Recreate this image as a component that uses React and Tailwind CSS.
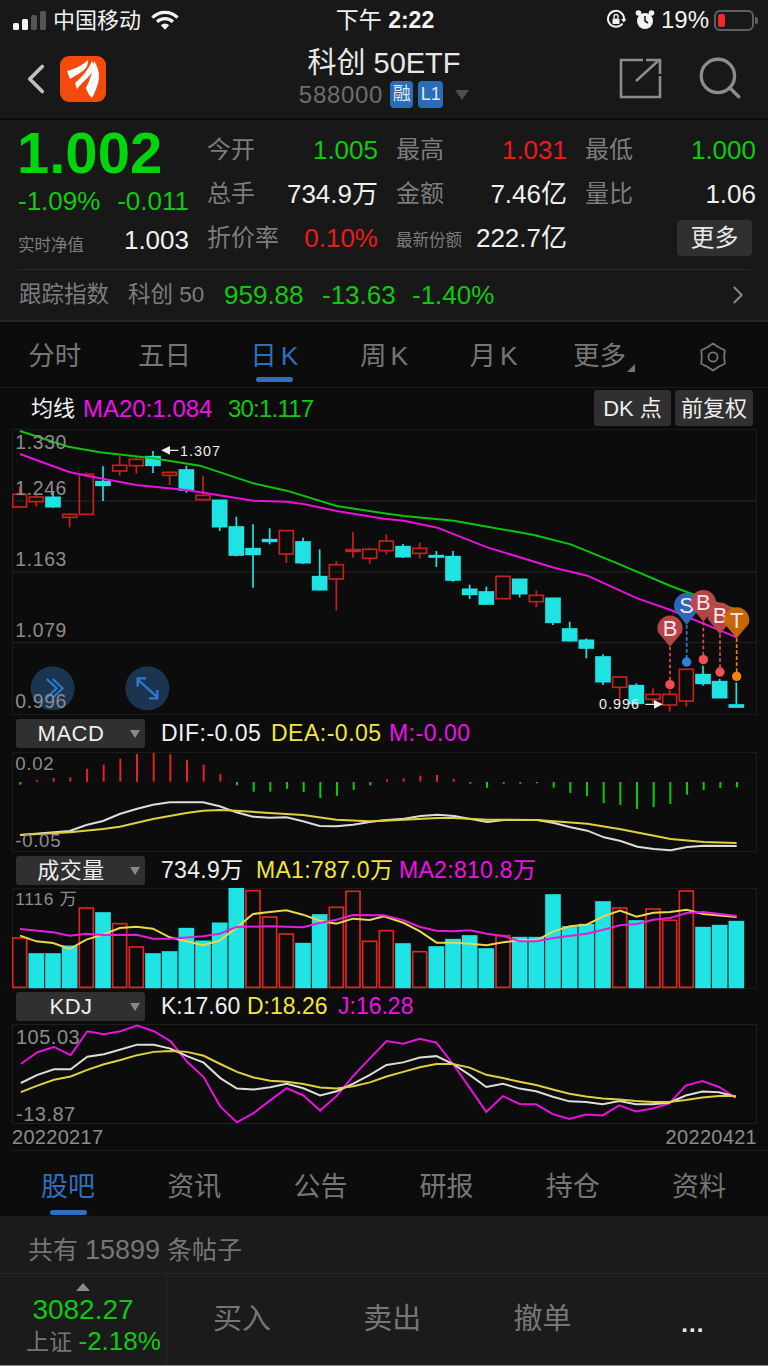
import { ChevronLeft, ChevronRight, Search } from "lucide-react";

const font = "font-['Liberation_Sans','Noto_Sans_CJK_SC',sans-serif]";

// data read off the chart, in 3x page units
const candles = [
  ["r", 185, 208, 246, 246], ["r", 208, 216, 230, 245], ["c", 198, 217, 245, 248], ["r", 264, 268, 277, 307],
  ["r", 142, 148, 268, 268], ["c", 124, 170, 181, 228], ["r", 92, 121, 138, 152], ["r", 97, 103, 122, 146],
  ["c", 78, 95, 121, 144], ["r", 140, 142, 151, 180], ["c", 122, 135, 195, 203], ["r", 152, 211, 224, 228],
  ["c", 225, 226, 305, 318], ["c", 275, 306, 390, 394], ["c", 298, 371, 388, 488], ["c", 310, 344, 349, 358],
  ["r", 316, 317, 387, 414], ["c", 338, 351, 413, 417], ["c", 373, 455, 494, 497], ["r", 408, 419, 462, 557],
  ["r", 321, 374, 379, 398], ["r", 368, 373, 400, 416], ["r", 328, 348, 377, 388], ["c", 357, 365, 395, 399],
  ["r", 353, 370, 385, 401], ["c", 378, 392, 396, 426], ["c", 378, 395, 465, 470], ["c", 479, 493, 508, 522],
  ["c", 485, 501, 537, 540], ["r", 453, 454, 521, 521], ["c", 462, 463, 506, 517], ["r", 497, 511, 530, 547],
  ["c", 518, 520, 592, 600], ["c", 590, 612, 647, 650], ["c", 640, 646, 669, 700], ["c", 688, 696, 770, 780],
  ["r", 755, 756, 787, 830], ["c", 775, 782, 835, 840], ["r", 790, 808, 823, 835], ["r", 795, 808, 840, 860],
  ["r", 732, 733, 828, 845], ["c", 722, 749, 775, 782], ["c", 762, 770, 818, 818], ["c", 772, 840, 846, 846],
];

const ma30 = "60,18 205,65 300,82 459,100 600,122 760,175 860,197 1010,243 1152,265 1212,273 1362,287 1462,305 1602,330 1712,358 1852,415 2012,483 2112,520 2212,555";
const ma20 = "60,87 205,140 259,152 409,180 559,195 760,227 860,230 910,237 1010,258 1152,281 1212,287 1312,308 1462,367 1662,428 1762,452 1912,520 2012,555 2210,637";

const macdBars = [
  [202, 210, 0], [196, 201, 1], [190, 201, 1], [188, 201, 1], [162, 201, 1], [150, 201, 1], [132, 201, 1], [118, 201, 1],
  [115, 201, 1], [119, 201, 1], [135, 201, 1], [150, 201, 1], [178, 201, 1], [202, 212, 0], [202, 231, 0], [202, 231, 0],
  [202, 222, 0], [202, 232, 0], [202, 250, 0], [202, 243, 0], [202, 226, 0], [202, 212, 0], [194, 201, 1], [191, 201, 1],
  [183, 201, 1], [181, 201, 1], [193, 201, 1], [202, 207, 0], [202, 219, 0], [202, 207, 0], [202, 207, 0], [202, 206, 0],
  [202, 219, 0], [202, 235, 0], [202, 245, 0], [202, 265, 0], [202, 271, 0], [202, 283, 0], [202, 277, 0], [202, 268, 0],
  [202, 240, 0], [202, 226, 0], [202, 220, 0], [202, 218, 0],
];
const dif = "60,361 209,349 259,331 309,319 359,298 409,283 459,270 509,263 609,263 659,275 709,293 759,306 809,309 859,308 909,320 959,334 1009,335 1059,330 1109,322 1152,317 1212,312 1262,304 1312,300 1362,304 1462,322 1512,316 1612,316 1662,325 1712,338 1762,348 1812,368 1862,379 1912,396 1962,403 2012,407 2062,397 2112,393 2210,394";
const dea = "60,361 209,353 309,343 359,336 459,313 559,295 609,288 659,286 709,288 809,295 909,301 1009,315 1109,320 1152,318 1212,315 1312,310 1362,310 1462,315 1612,316 1762,327 1862,344 2012,373 2112,382 2210,385";

const volBars = [
  ["r", 670], ["c", 718], ["c", 718], ["c", 695], ["r", 580], ["c", 595], ["r", 627], ["r", 697], ["c", 718], ["c", 712], ["c", 642],
  ["c", 680], ["c", 626], ["c", 521], ["r", 528], ["r", 607], ["r", 658], ["c", 687], ["c", 601], ["r", 578], ["r", 530], ["r", 680],
  ["r", 648], ["c", 688], ["r", 711], ["c", 697], ["c", 675], ["c", 664], ["c", 703], ["r", 663], ["c", 669], ["c", 669], ["c", 541],
  ["c", 637], ["c", 630], ["c", 562], ["r", 580], ["c", 619], ["r", 583], ["r", 617], ["r", 529], ["c", 639], ["c", 633], ["c", 621],
];
const ma1 = "60,663 109,680 159,685 209,703 259,675 309,660 359,640 409,636 459,642 509,668 559,680 609,692 659,678 709,640 759,598 809,592 859,587 909,600 959,618 1009,627 1059,612 1109,616 1152,605 1212,625 1260,650 1310,684 1360,684 1410,687 1460,692 1510,683 1560,676 1610,677 1660,650 1710,635 1760,630 1810,605 1860,588 1910,606 1960,594 2010,592 2060,585 2110,598 2210,607";
const ma2 = "60,643 159,653 209,663 259,657 309,661 409,660 459,672 509,672 609,665 659,657 709,637 809,635 909,638 959,625 1009,615 1059,601 1152,602 1212,617 1260,637 1310,648 1360,650 1410,647 1460,657 1510,664 1560,680 1610,680 1660,670 1760,657 1810,645 1860,632 1910,628 1960,615 2010,610 2060,595 2110,592 2160,598 2210,604";

// kdj values in the crop's own units (x = 40 + 34.03 * i)
const kdjJ = [222, 186, 170, 195, 122, 131, 122, 105, 122, 152, 215, 262, 352, 400, 372, 333, 296, 318, 364, 320, 258, 205, 152, 160, 145, 157, 222, 295, 368, 320, 344, 345, 375, 390, 376, 379, 348, 367, 358, 343, 288, 274, 292, 325];
const kdjK = [280, 255, 238, 238, 200, 192, 178, 163, 163, 175, 198, 218, 265, 297, 300, 293, 282, 296, 318, 305, 282, 255, 225, 217, 202, 198, 222, 255, 292, 282, 297, 305, 322, 336, 338, 345, 335, 345, 345, 340, 318, 306, 308, 322];
const kdjD = [308, 288, 270, 260, 240, 223, 210, 195, 185, 182, 185, 197, 222, 246, 263, 273, 276, 283, 294, 297, 290, 278, 260, 246, 232, 222, 222, 233, 255, 265, 276, 286, 300, 313, 321, 327, 330, 335, 338, 338, 332, 324, 320, 320];
const toKdj = (list) => list.map((y, i) => `${40 + 34.03 * i},${y}`).join(" ");

const pins = [
  { x: 2010, y: 610, tip: 665, dot: 779, letter: "B", fill: "#c0474a", dash: "#e8484c", spot: "#f05050" },
  { x: 2060, y: 542, tip: 600, dot: 711, letter: "S", fill: "#2f6dbf", dash: "#2f7fe0", spot: "#2f7fe0" },
  { x: 2110, y: 533, tip: 590, dot: 704, letter: "B", fill: "#c0474a", dash: "#e8484c", spot: "#f05050" },
  { x: 2160, y: 571, tip: 628, dot: 741, letter: "B", fill: "#c0474a", dash: "#e8484c", spot: "#f05050" },
  { x: 2210, y: 585, tip: 640, dot: 754, letter: "T", fill: "#cf6a08", dash: "#f5820d", spot: "#f5820d" },
];

const axis = "#8c8c8c";
const candleRed = "#c8201c";
const cyan = "#20e3e3";

const gearPoints = Array.from({ length: 12 }, (_, k) => {
  const r = k % 2 === 0 ? 13.6 : 11.2;
  const a = (Math.PI / 6) * k - Math.PI / 2;
  return `${15 + r * Math.cos(a)},${15 + r * Math.sin(a)}`;
}).join(" ");

function KChart() {
  return (
    <svg className="block w-[745px] h-[286px]" viewBox="36 12 2235 858">
      <rect x="37" y="13" width="2233" height="856" fill="none" stroke="#1e1e1e" strokeWidth="3" />
      {[228, 441, 653].map((y) => (
        <line key={y} x1="36" x2="2271" y1={y} y2={y} stroke="#1e1e1e" strokeWidth="4" />
      ))}
      <circle cx="158" cy="790" r="66" fill="#1b3450" />
      <path d="M140 762 L170 790 L140 818 M158 762 L188 790 L158 818" fill="none" stroke="#2f7ad0" strokeWidth="6" />
      <circle cx="442" cy="790" r="66" fill="#1b3450" />
      <path d="M415 765 L470 815 M413 785 V760 H438 M472 795 V820 H447" fill="none" stroke="#2f7ad0" strokeWidth="7" />
      {candles.map(([t, hi, top, bot, lo], i) => {
        const x = 59 + 50 * i;
        const c = t === "r" ? candleRed : cyan;
        return (
          <g key={i}>
            <line x1={x} x2={x} y1={hi} y2={top} stroke={c} strokeWidth="5" />
            <line x1={x} x2={x} y1={bot} y2={lo} stroke={c} strokeWidth="5" />
            <rect x={x - 21} y={top} width="42" height={Math.max(bot - top, 1)} fill={t === "r" ? "none" : cyan} stroke={c} strokeWidth="5" />
          </g>
        );
      })}
      <polyline points={ma30} fill="none" stroke="#0fc30f" strokeWidth="6" />
      <polyline points={ma20} fill="none" stroke="#ea10e0" strokeWidth="6" />
      <g fill={axis} fontSize="58" letterSpacing="2">
        <text x="46" y="72">1.330</text>
        <text x="46" y="210">1.246</text>
        <text x="46" y="422">1.163</text>
        <text x="46" y="637">1.079</text>
        <text x="46" y="850">0.996</text>
      </g>
      <g fill="#eee" fontSize="43" letterSpacing="3">
        <text x="540" y="93">1.307</text>
        <text x="1797" y="853">0.996</text>
      </g>
      <path d="M535 76 H497 M508 66 L488 76 L508 86 Z" fill="#eee" stroke="#eee" strokeWidth="4" />
      <path d="M1936 838 H1974 M1964 828 L1984 838 L1964 848 Z" fill="#eee" stroke="#eee" strokeWidth="4" />
      {pins.map((p, i) => (
        <g key={i}>
          <line x1={p.x} x2={p.x} y1={p.tip} y2={p.dot} stroke={p.dash} strokeWidth="5" strokeDasharray="11 7" />
          <circle cx={p.x} cy={p.dot} r="14" fill={p.spot} />
          <path d={`M${p.x - 36} ${p.y + 12} A38 38 0 1 1 ${p.x + 36} ${p.y + 12} L${p.x} ${p.tip} Z`} fill={p.fill} fillOpacity="0.95" />
          <text x={p.x} y={p.y + 23} fontSize="66" fill="#f6e6e6" textAnchor="middle">{p.letter}</text>
        </g>
      ))}
    </svg>
  );
}

function MacdChart() {
  return (
    <svg className="block w-[745px] h-[100px]" viewBox="36 112 2235 300">
      <rect x="37" y="113" width="2233" height="298" fill="none" stroke="#1e1e1e" strokeWidth="3" />
      {macdBars.map(([a, b, up], i) => (
        <line key={i} x1={61 + 50 * i} x2={61 + 50 * i} y1={a} y2={b} stroke={up ? "#e52222" : "#0cc80c"} strokeWidth="6" />
      ))}
      <polyline points={dif} fill="none" stroke="#dcdcdc" strokeWidth="6" />
      <polyline points={dea} fill="none" stroke="#e0d040" strokeWidth="6" />
      <g fill={axis} fontSize="56" letterSpacing="2">
        <text x="46" y="166">0.02</text>
        <text x="46" y="398">-0.05</text>
      </g>
    </svg>
  );
}

function VolChart() {
  return (
    <svg className="block w-[745px] h-[101px]" viewBox="36 520 2235 303">
      <rect x="37" y="521" width="2233" height="301" fill="none" stroke="#1e1e1e" strokeWidth="3" />
      {volBars.map(([t, top], i) => (
        <rect key={i} x={38 + 50 * i} y={top} width="42" height={818 - top} fill={t === "r" ? "none" : cyan} stroke={t === "r" ? "#e52222" : cyan} strokeWidth="5" />
      ))}
      <polyline points={ma1} fill="none" stroke="#e8d84a" strokeWidth="6" />
      <polyline points={ma2} fill="none" stroke="#e21fd8" strokeWidth="6" />
      <text x="46" y="572" fill={axis} fontSize="52" letterSpacing="2">1116 万</text>
    </svg>
  );
}

function KdjChart() {
  return (
    <div className="relative w-[745px] h-[100px] box-border border border-[#1e1e1e]">
      <svg className="block w-full h-full overflow-visible" viewBox="24 103 1521 299" preserveAspectRatio="none">
        <polyline points={toKdj(kdjJ)} fill="none" stroke="#ea10e0" strokeWidth="2" vectorEffect="non-scaling-stroke" />
        <polyline points={toKdj(kdjK)} fill="none" stroke="#dcdcdc" strokeWidth="2" vectorEffect="non-scaling-stroke" />
        <polyline points={toKdj(kdjD)} fill="none" stroke="#e0d040" strokeWidth="2" vectorEffect="non-scaling-stroke" />
      </svg>
      <span className="absolute left-[3px] -top-[3px] text-[20px] text-[#8c8c8c] tracking-[0.5px]">105.03</span>
      <span className="absolute left-[3px] top-[74px] text-[20px] text-[#8c8c8c] tracking-[0.5px]">-13.87</span>
    </div>
  );
}

function Picker({ label }) {
  return (
    <div className="relative w-[129px] h-[29px] rounded-[3px] bg-[#303030] flex items-center pl-[10px] text-[22px] text-[#eee] tracking-[0.5px]">
      <span className="w-[90px] text-center">{label}</span>
      <span className="absolute right-[5px] top-[11px] w-0 h-0 border-x-[5px] border-x-transparent border-t-[8px] border-t-[#8a8a8a]"></span>
    </div>
  );
}

function Stat({ label, value, color = "text-[#f0f0f0]", small }) {
  return (
    <div className="flex items-center justify-between w-[171px]">
      <span className={small ? "text-[16.5px] text-[#7d7d7d] mt-[4px]" : "text-[24px] text-[#7d7d7d]"}>{label}</span>
      <span className={`text-[26px] ${color}`}>{value}</span>
    </div>
  );
}

export default function App() {
  return (
    <div className={`${font} w-[768px] h-[1366px] bg-[#0c0c0c] overflow-hidden flex flex-col`}>
      {/* STATUS BAR */}
      <div className="h-[40px] bg-[#181818] flex items-center justify-between pl-[12px] pr-[10px] text-[#f2f2f2] shrink-0">
        <div className="flex items-center w-[230px]">
          <svg width="36" height="20" viewBox="0 0 36 20" className="mr-[5px]">
            <rect x="1" y="13" width="6" height="7" rx="1.5" fill="#f2f2f2" />
            <rect x="10" y="9" width="6" height="11" rx="1.5" fill="#f2f2f2" />
            <rect x="19" y="5" width="6" height="15" rx="1.5" fill="#555" />
            <rect x="28" y="1" width="6" height="19" rx="1.5" fill="#555" />
          </svg>
          <span className="text-[22px]">中国移动</span>
          <svg width="28" height="21" viewBox="0 0 30 22" className="ml-[10px]">
            <path d="M1.5 8 A19 19 0 0 1 28.5 8 M6.5 12.5 A12 12 0 0 1 23.5 12.5" fill="none" stroke="#f2f2f2" strokeWidth="3.4" />
            <path d="M10.5 16 A6.5 6.5 0 0 1 19.5 16 L15 21 Z" fill="#f2f2f2" />
          </svg>
        </div>
        <div className="text-[23px]">下午 <span className="font-bold">2:22</span></div>
        <div className="flex items-center justify-end w-[230px]">
          <svg width="20" height="22" viewBox="0 0 20 22" className="mr-[9px]">
            <path d="M16.5 14.5 A8 8 0 1 1 18 10" fill="none" stroke="#f2f2f2" strokeWidth="2" />
            <path d="M15 10 H20.5 L17.7 13.5 Z" fill="#f2f2f2" />
            <rect x="6.5" y="9.5" width="7" height="5.5" rx="1" fill="#f2f2f2" />
            <path d="M8 9.5 V7.5 A2 2 0 0 1 12 7.5 V9.5" fill="none" stroke="#f2f2f2" strokeWidth="1.4" />
          </svg>
          <svg width="20" height="22" viewBox="0 0 20 22" className="mr-[6px]">
            <circle cx="10" cy="12" r="8" fill="#f2f2f2" />
            <path d="M10 7 V12 L13 14" fill="none" stroke="#181818" strokeWidth="1.6" />
            <circle cx="3.5" cy="4" r="2.8" fill="#f2f2f2" />
            <circle cx="16.5" cy="4" r="2.8" fill="#f2f2f2" />
          </svg>
          <span className="text-[24px] mr-[5px]">19%</span>
          <div className="relative w-[40px] h-[21px] rounded-[6px] border-2 border-[#606060] p-[2px]">
            <div className="w-[7px] h-full rounded-[2px] bg-[#f02a2a]"></div>
          </div>
          <div className="w-[3px] h-[7px] rounded-r-[2px] bg-[#606060] ml-[1px]"></div>
        </div>
      </div>

      {/* NAV */}
      <div className="relative h-[80px] bg-[#181818] shrink-0 border-b-2 border-[#0c0c0c]">
        <div className="absolute left-[21px] top-[14px] flex items-center">
          <ChevronLeft size={50} strokeWidth={1.8} color="#c0c0c0" className="-mr-[5px] -ml-[10px]" />
          <svg width="46" height="46" viewBox="0 0 46 46" className="ml-[4px] -mt-[1px]">
            <rect width="46" height="46" rx="9" fill="#f44a0c" />
            <path d="M7 15 C14 13 22 10 28 4 C28 8 27 11 25 13 C20 18 14 20 10 23 Z" fill="#fff" />
            <path d="M15 27 C22 21 28 14 32 5 C34 8 34 11 34 13 C31 20 23 25 17 33 Z" fill="#fff" />
            <path d="M26 32 C30 24 33 15 34 5 C37 9 39 15 39 20 C39 28 35 36 32 42 C29 39 27 36 26 32 Z" fill="#fff" />
          </svg>
        </div>
        <div className="flex flex-col items-center pt-[6px]">
          <div className="text-[29px] leading-[34px] text-[#e8e8e8]">科创 50ETF</div>
          <div className="flex items-center h-[27px] mt-[1px]">
            <span className="text-[24px] text-[#6e6e6e] tracking-[0.7px]">588000</span>
            <span className="ml-[7px] w-[23px] h-[27px] rounded-[4px] bg-[#2a6cb8] text-[#dce8f5] text-[18px] flex items-center justify-center">融</span>
            <span className="ml-[5px] w-[25px] h-[27px] rounded-[4px] bg-[#2a6cb8] text-[#dce8f5] text-[18px] flex items-center justify-center">L1</span>
            <span className="ml-[12px] w-0 h-0 border-x-[7px] border-x-transparent border-t-[10px] border-t-[#4d4d4d]"></span>
          </div>
        </div>
        <svg width="44" height="42" viewBox="0 0 44 42" className="absolute left-[619px] top-[17px]">
          <path d="M24 3 H2 V40 H41 V19" fill="none" stroke="#8c8c8c" strokeWidth="2.6" />
          <path d="M17 24 L39 4 M27 3 H41 V17" fill="none" stroke="#8c8c8c" strokeWidth="2.6" />
        </svg>
        <Search size={50} strokeWidth={1.6} color="#8c8c8c" className="absolute left-[695px] top-[13px]" />
      </div>

      {/* QUOTE */}
      <div className="h-[202px] bg-[#181818] border-b-2 border-[#262626] shrink-0 flex flex-col px-[18px]">
        <div className="flex h-[148px]">
          <div className="w-[171px] shrink-0 flex flex-col">
            <div className="text-[58px] leading-[60px] font-bold text-[#00d50d] mt-[3px] -ml-[1px] h-[60px]">1.002</div>
            <div className="flex justify-between text-[26px] text-[#12c912] leading-[30px] mt-[3px]">
              <span>-1.09%</span>
              <span>-0.011</span>
            </div>
            <div className="flex justify-between items-center text-[#f0f0f0] mt-[9px] h-[30px]">
              <span className="text-[16.5px] text-[#7d7d7d] mt-[10px]">实时净值</span>
              <span className="text-[26px]">1.003</span>
            </div>
          </div>
          <div className="ml-[18px] flex-1 grid grid-cols-[171px_171px_171px] gap-x-[18px] gap-y-[14px] pt-[15px] content-start h-[148px] [&>div]:h-[30px]">
            <Stat label="今开" value="1.005" color="text-[#12c912]" />
            <Stat label="最高" value="1.031" color="text-[#e81c1c]" />
            <Stat label="最低" value="1.000" color="text-[#12c912]" />
            <Stat label="总手" value="734.9万" />
            <Stat label="金额" value="7.46亿" />
            <Stat label="量比" value="1.06" />
            <Stat label="折价率" value="0.10%" color="text-[#e81c1c]" />
            <Stat label="最新份额" value="222.7亿" small />
            <div className="flex justify-end">
              <span className="w-[75px] h-[36px] -mt-[3px] mr-[4px] rounded-[4px] bg-[#303030] text-[24px] text-[#e8e8e8] flex items-center justify-center">更多</span>
            </div>
          </div>
        </div>
        <div className="h-[52px] border-t border-[#2a2a2a] flex items-center mt-[1px] text-[26px]">
          <span className="text-[#7d7d7d] text-[22.5px] w-[110px] pl-[1px]">跟踪指数</span>
          <span className="text-[#7d7d7d] text-[22.5px] w-[96px]">科创 50</span>
          <span className="text-[#12c912] w-[98px]">959.88</span>
          <span className="text-[#12c912] w-[90px]">-13.63</span>
          <span className="text-[#12c912]">-1.40%</span>
          <ChevronRight size={30} strokeWidth={1.5} color="#8a8a8a" className="ml-auto -mr-[3px]" />
        </div>
      </div>

      {/* PERIOD TABS */}
      <div className="h-[66px] pt-[4px] grid grid-cols-7 items-center border-b border-[#1c1c1c] shrink-0 text-[26.5px] text-[#767676] text-center">
        <span>分时</span>
        <span>五日</span>
        <span className="relative text-[#2f6fbf]">
          日<span className="ml-[4px]">K</span>
          <span className="absolute left-[37px] -bottom-[6px] w-[37px] h-[5px] rounded-full bg-[#2f6fbf]"></span>
        </span>
        <span>周<span className="ml-[4px]">K</span></span>
        <span>月<span className="ml-[4px]">K</span></span>
        <span className="relative -ml-[8px]">
          更多
          <span className="absolute left-[86px] top-[27px] w-0 h-0 border-l-[8px] border-l-transparent border-b-[8px] border-b-[#767676]"></span>
        </span>
        <span className="flex justify-center">
          <svg width="30" height="30" viewBox="0 0 30 30">
            <polygon points={gearPoints} fill="none" stroke="#767676" strokeWidth="1.8" strokeLinejoin="round" />
            <circle cx="15" cy="15" r="4.6" fill="none" stroke="#767676" strokeWidth="1.8" />
          </svg>
        </span>
      </div>

      {/* CHARTS */}
      <div className="flex flex-col pl-[12px] shrink-0">
        <div className="h-[41px] flex items-center text-[22px]">
          <span className="text-[#f0f0f0] ml-[19px] w-[52px]">均线</span>
          <span className="text-[#f010e8] text-[24px] w-[145px]">MA20:1.084</span>
          <span className="text-[#12c912] text-[24px] tracking-[-0.8px]">30:1.117</span>
          <span className="ml-auto w-[77px] h-[36px] rounded-[3px] bg-[#303030] text-[#eee] flex items-center justify-center mb-[1px]">DK 点</span>
          <span className="ml-[4px] mr-[15px] w-[78px] h-[36px] rounded-[3px] bg-[#303030] text-[#eee] flex items-center justify-center mb-[1px]">前复权</span>
        </div>
        <KChart />

        <div className="h-[37px] pl-[4px] flex items-center text-[23px] tracking-[0.5px]">
          <Picker label="MACD" />
          <span className="ml-[16px] text-[#f0f0f0] w-[110px]">DIF:-0.05</span>
          <span className="text-[#f3e43a] w-[118px]">DEA:-0.05</span>
          <span className="text-[#f010e8]">M:-0.00</span>
        </div>
        <MacdChart />

        <div className="h-[36px] pl-[4px] flex items-center text-[23px] tracking-[0.3px]">
          <Picker label="成交量" />
          <span className="ml-[16px] text-[#f0f0f0] w-[95px]">734.9万</span>
          <span className="text-[#f3e43a] w-[143px]">MA1:787.0万</span>
          <span className="text-[#f010e8]">MA2:810.8万</span>
        </div>
        <VolChart />

        <div className="h-[35px] pl-[4px] flex items-center text-[23px]">
          <Picker label="KDJ" />
          <span className="ml-[16px] text-[#f0f0f0] w-[86px]">K:17.60</span>
          <span className="text-[#f3e43a] w-[91px]">D:18.26</span>
          <span className="text-[#f010e8]">J:16.28</span>
        </div>
        <KdjChart />
        <div className="h-[27px] flex items-center justify-between pr-[11px] text-[20px] text-[#8c8c8c] tracking-[0.3px] border-b border-[#1c1c1c]">
          <span>20220217</span>
          <span>20220421</span>
        </div>
      </div>

      {/* BOTTOM TABS */}
      <div className="h-[65px] pt-[8px] pl-[5px] pr-[6px] grid grid-cols-6 items-center shrink-0 text-[27px] text-[#767676] text-center">
        <span className="relative text-[#2f6fbf]">
          股吧
          <span className="absolute left-[45px] -bottom-[7px] w-[37px] h-[5px] rounded-full bg-[#2f6fbf]"></span>
        </span>
        <span>资讯</span>
        <span>公告</span>
        <span>研报</span>
        <span>持仓</span>
        <span>资料</span>
      </div>

      {/* POSTS + TRADE BAR */}
      <div className="h-[58px] bg-[#1b1b1b] border-b border-[#262626] flex items-center pt-[12px] pl-[28px] text-[25px] text-[#767676] shrink-0">
        共有<span className="text-[27px] mx-[7px]">15899</span>条帖子
      </div>
      <div className="h-[91px] bg-[#1b1b1b] flex shrink-0">
        <div className="w-[167px] border-r border-[#262626] flex flex-col items-center pt-[9px]">
          <span className="w-0 h-0 border-x-[7px] border-x-transparent border-b-[8px] border-b-[#8a8a8a]"></span>
          <span className="text-[28px] leading-[30px] text-[#12c912] mt-[4px]">3082.27</span>
          <span className="text-[23px] leading-[32px] text-[#767676] ml-[21px] whitespace-nowrap">上证 <span className="text-[#12c912] text-[26px]">-2.18%</span></span>
        </div>
        <div className="flex-1 grid grid-cols-4 items-center text-center text-[29px] text-[#767676]">
          <span>买入</span>
          <span>卖出</span>
          <span>撤单</span>
          <span className="text-[#e8e8e8] text-[24px] font-bold mt-[8px] tracking-[1px]">...</span>
        </div>
      </div>
      <div className="h-[1px] bg-[#8a8a8a] shrink-0"></div>
    </div>
  );
}
